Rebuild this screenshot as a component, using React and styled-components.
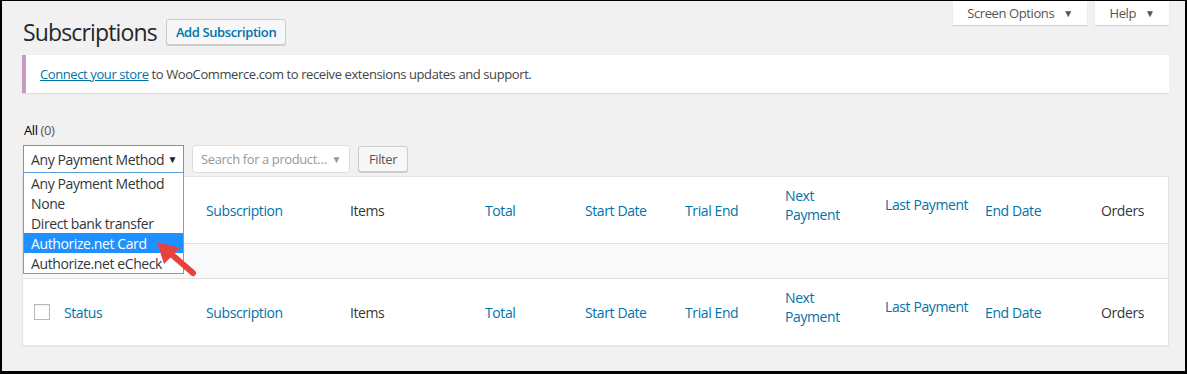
import React from "react";
import styled, { createGlobalStyle } from "styled-components";

const Global = createGlobalStyle`
  html, body { margin: 0; padding: 0; background: #000; }
  body { font-family: "Open Sans", "Noto Sans", Arial, sans-serif; letter-spacing: -0.4px; }
  * { box-sizing: border-box; }
`;

const Frame = styled.div`
  position: relative;
  width: 1187px;
  height: 374px;
  background: #000;
  padding: 1px 2px 3px 2px;
`;

const Page = styled.div`
  position: relative;
  height: 100%;
  background: #f1f1f1;
  padding: 0 16px 0 20px;
  display: flex;
  flex-direction: column;
  color: #23282d;
  font-size: 13px;
`;

const HeaderRow = styled.div`
  display: flex;
  justify-content: space-between;
  align-items: flex-start;
`;

const TitleGroup = styled.div`
  display: flex;
  align-items: center;
  padding-top: 18px;
  padding-left: 1px;
  gap: 9px;
`;

const Title = styled.h1`
  margin: 0;
  font-size: 23px;
  font-weight: 400;
  line-height: 26px;
  color: #23282d;
  letter-spacing: -0.85px;
`;

const Button = styled.button`
  font-family: inherit;
  letter-spacing: -0.4px;
  height: ${(p) => p.h || 26}px;
  padding: 0 ${(p) => p.px || 9}px;
  border: 1px solid #ccc;
  border-radius: 3px;
  background: #f7f7f7;
  box-shadow: 0 1px 0 #ccc;
  font-size: 13px;
  font-weight: ${(p) => (p.bold ? 600 : 400)};
  color: ${(p) => (p.primaryText ? "#0073aa" : "#555")};
  line-height: 1;
  white-space: nowrap;
  cursor: pointer;
`;

const Tabs = styled.div`
  display: flex;
  gap: 8px;
`;

const Tab = styled.div`
  width: ${(p) => p.w}px;
  height: 24px;
  background: #fff;
  box-shadow: 0 1px 1px rgba(0, 0, 0, 0.12);
  display: flex;
  align-items: center;
  justify-content: center;
  gap: 9px;
  color: #555;
  font-size: 13px;
`;

const Caret = styled.span`
  font-size: 10px;
  color: ${(p) => p.c || "#555"};
`;

const Notice = styled.div`
  margin-top: 10px;
  height: 38px;
  background: #fff;
  border-left: 4px solid #cc99c2;
  box-shadow: 0 1px 1px rgba(0, 0, 0, 0.08);
  display: flex;
  align-items: center;
  padding-left: 14px;
  font-size: 13px;
  color: #444;
`;

const Link = styled.a`
  color: #0073aa;
  text-decoration: underline;
`;

const Subsub = styled.div`
  margin-top: 24px;
  height: 26px;
  line-height: 26px;
  padding-left: 2px;
  font-size: 13px;
  color: #000;
`;

const Count = styled.span`
  color: #555;
`;

const FilterRow = styled.div`
  margin-top: 2px;
  display: flex;
  align-items: center;
  gap: 8px;
  padding-left: 1px;
  height: 28px;
`;

const SelectWrap = styled.div`
  position: relative;
  width: 161px;
  height: 28px;
`;

const Select = styled.div`
  height: 28px;
  border: 1px solid #5b9dd9;
  background: #fff;
  display: flex;
  align-items: center;
  justify-content: space-between;
  padding: 0 6px 0 7px;
  font-size: 14px;
  color: #32373c;
  white-space: nowrap;
`;

const Options = styled.ul`
  position: absolute;
  top: 28px;
  left: 0;
  width: 161px;
  margin: 0;
  padding: 0;
  list-style: none;
  background: #fff;
  border: 1px solid #7a9cd3;
  border-top: none;
  z-index: 5;
`;

const Option = styled.li`
  height: 20px;
  line-height: 21px;
  padding-left: 7px;
  font-size: 14px;
  white-space: nowrap;
  color: ${(p) => (p.active ? "#fff" : "#32373c")};
  background: ${(p) => (p.active ? "#1e90ff" : "transparent")};
`;

const Search = styled.div`
  width: 158px;
  height: 28px;
  background: #fff;
  border: 1px solid #ddd;
  border-radius: 4px;
  display: flex;
  align-items: center;
  justify-content: space-between;
  padding: 0 8px 0 8px;
  font-size: 13px;
  color: #999;
  white-space: nowrap;
`;

const Table = styled.div`
  margin-top: 3px;
  background: #fff;
  border: 1px solid #e5e5e5;
  box-shadow: 0 1px 1px rgba(0, 0, 0, 0.04);
`;

const Row = styled.div`
  display: grid;
  grid-template-columns: 41px 142px 144px 135px 100px 100px 100px 100px 100px 116px 1fr;
  height: ${(p) => p.h}px;
  align-items: center;
  background: ${(p) => p.bg || "#fff"};
  border-top: ${(p) => (p.topBorder ? "1px solid #e1e1e1" : "none")};
`;

const Cell = styled.div`
  font-size: 14px;
  line-height: 19px;
  color: ${(p) => (p.plain ? "#32373c" : "#0073aa")};
  max-width: ${(p) => (p.narrow ? "60px" : "none")};
  margin-bottom: ${(p) => (p.raise ? 11 : 0)}px;
  white-space: ${(p) => (p.narrow ? "normal" : "nowrap")};
`;

const CheckCell = styled.div`
  padding-left: 11px;
  display: flex;
  align-items: center;
`;

const Checkbox = styled.span`
  width: 16px;
  height: 16px;
  border: 1px solid #b4b9be;
  background: #fff;
  box-shadow: inset 0 1px 2px rgba(0, 0, 0, 0.07);
`;

const ArrowSvg = styled.svg`
  position: absolute;
  left: 150px;
  top: 235px;
  z-index: 10;
`;

const columns = [
  { label: "Status" },
  { label: "Subscription" },
  { label: "Items", plain: true },
  { label: "Total" },
  { label: "Start Date" },
  { label: "Trial End" },
  { label: "Next Payment", narrow: true, raise: true },
  { label: "Last Payment", raise: true },
  { label: "End Date" },
  { label: "Orders", plain: true },
];

const HeadRow = ({ h, topBorder }) => (
  <Row h={h} topBorder={topBorder}>
    <CheckCell>
      <Checkbox />
    </CheckCell>
    {columns.map((c) => (
      <Cell key={c.label} plain={c.plain} narrow={c.narrow} raise={c.raise}>
        {c.label}
      </Cell>
    ))}
  </Row>
);

const options = [
  "Any Payment Method",
  "None",
  "Direct bank transfer",
  "Authorize.net Card",
  "Authorize.net eCheck",
];

export default function App() {
  return (
    <>
      <Global />
      <Frame>
        <Page>
          <HeaderRow>
            <TitleGroup>
              <Title>Subscriptions</Title>
              <Button bold primaryText px={9}>
                Add Subscription
              </Button>
            </TitleGroup>
            <Tabs>
              <Tab w={134}>
                Screen Options <Caret>▼</Caret>
              </Tab>
              <Tab w={74}>
                Help <Caret>▼</Caret>
              </Tab>
            </Tabs>
          </HeaderRow>
          <Notice>
            <span>
              <Link href="#">Connect your store</Link> to WooCommerce.com to
              receive extensions updates and support.
            </span>
          </Notice>
          <Subsub>
            All <Count>(0)</Count>
          </Subsub>
          <FilterRow>
            <SelectWrap>
              <Select>
                <span>Any Payment Method</span>
                <Caret c="#222">▼</Caret>
              </Select>
              <Options>
                {options.map((o) => (
                  <Option key={o} active={o === "Authorize.net Card"}>
                    {o}
                  </Option>
                ))}
              </Options>
            </SelectWrap>
            <Search>
              <span>Search for a product…</span>
              <Caret c="#999">▼</Caret>
            </Search>
            <Button h={26} px={10}>
              Filter
            </Button>
          </FilterRow>
          <Table>
            <HeadRow h={66} />
            <Row h={35} bg="#f9f9f9" topBorder />
            <HeadRow h={67} topBorder />
          </Table>
        </Page>
        <ArrowSvg width="50" height="45" viewBox="0 0 50 45">
          <line
            x1="20"
            y1="18"
            x2="43"
            y2="38"
            stroke="#e8423f"
            strokeWidth="6"
            strokeLinecap="round"
          />
          <polygon points="7,7 30,13 14,29" fill="#e8423f" />
        </ArrowSvg>
      </Frame>
    </>
  );
}
